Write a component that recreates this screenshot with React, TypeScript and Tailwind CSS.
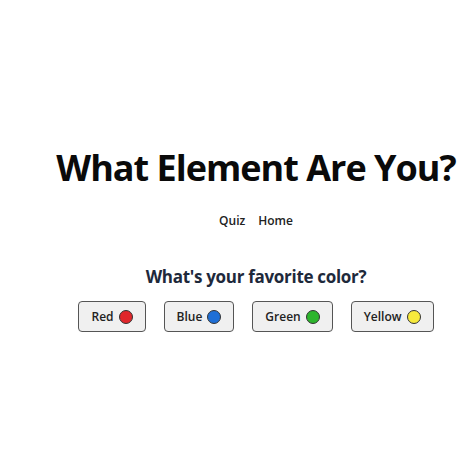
import React from 'react';

const colors = [
  { name: 'Red', dot: 'bg-[#e0262b]' },
  { name: 'Blue', dot: 'bg-[#1f6fd6]' },
  { name: 'Green', dot: 'bg-[#2db52d]' },
  { name: 'Yellow', dot: 'bg-[#f7ea3c]' },
];

export default function App() {
  return (
    <div
      className="min-h-[464px] bg-white pl-[38px] pt-[145px] text-center"
      style={{ fontFamily: '"Open Sans", "Noto Sans", sans-serif' }}
    >
      <h1 className="text-[36px] font-bold leading-[46px] tracking-[-1px] text-[#0a0a0a]">
        What Element Are You?
      </h1>

      <nav className="mt-[21px] flex justify-center gap-[13px] text-[12px] font-semibold text-[#222]">
        <a href="#">Quiz</a>
        <a href="#">Home</a>
      </nav>

      <h2 className="mt-[35px] text-[17px] font-bold leading-[24px] tracking-[-0.3px] text-[#1e293b]">
        What's your favorite color?
      </h2>

      <div className="mt-[12px] flex justify-center gap-[18px]">
        {colors.map((c) => (
          <button
            key={c.name}
            className="flex h-[31px] items-center gap-[5px] rounded-[4px] border border-[#555] bg-[#f0f0f0] px-[12px] text-[12px] font-semibold text-[#222]"
          >
            {c.name}
            <span className={`h-[14px] w-[14px] rounded-full border border-[#333] ${c.dot}`} />
          </button>
        ))}
      </div>
    </div>
  );
}
